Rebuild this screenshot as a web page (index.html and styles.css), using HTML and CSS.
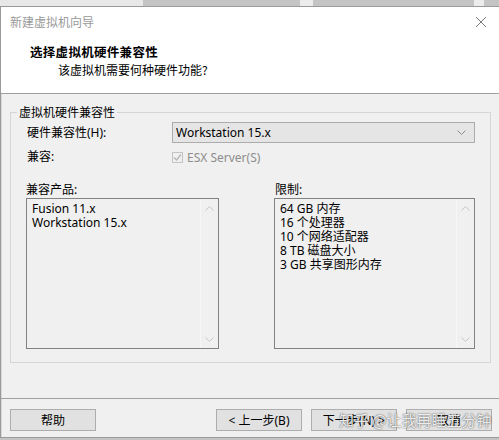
FILE: index.html
```html
<!DOCTYPE html>
<html lang="zh-CN">
<head>
    <meta charset="UTF-8">
    <meta name="viewport" content="width=device-width, initial-scale=1.0">
    <title>新建虚拟机向导</title>
    <link rel="stylesheet" href="styles.css">
</head>
<body>
    <div class="desktop-strip"></div>

    <div class="window">
        <div class="titlebar">
            <span class="titlebar-text">新建虚拟机向导</span>
            <svg class="close-icon" width="12" height="12" viewBox="0 0 12 12">
                <path d="M1 1 L11 11 M11 1 L1 11" stroke="#7a7a7a" stroke-width="1" fill="none"/>
            </svg>
        </div>

        <header class="wizard-header">
            <h1>选择虚拟机硬件兼容性</h1>
            <p>该虚拟机需要何种硬件功能?</p>
        </header>

        <main class="wizard-body">
            <fieldset class="group">
                <legend>虚拟机硬件兼容性</legend>

                <div class="form-row">
                    <span class="label">硬件兼容性(H):</span>
                    <div class="select">
                        <span>Workstation 15.x</span>
                        <svg width="9" height="5" viewBox="0 0 9 5">
                            <path d="M0.5 0.5 L4.5 4.5 L8.5 0.5" stroke="#8c8c8c" stroke-width="1" fill="none"/>
                        </svg>
                    </div>
                </div>

                <div class="form-row check-row">
                    <span class="label">兼容:</span>
                    <label class="checkbox">
                        <span class="box">
                            <svg width="9" height="9" viewBox="0 0 9 9">
                                <path d="M1 4.5 L3.5 7 L8 1.5" stroke="#b4b4b4" stroke-width="1.2" fill="none"/>
                            </svg>
                        </span>
                        ESX Server(S)
                    </label>
                </div>

                <div class="lists">
                    <div class="list-col left">
                        <span class="label">兼容产品:</span>
                        <div class="listbox">
                            <ul>
                                <li>Fusion 11.x</li>
                                <li>Workstation 15.x</li>
                            </ul>
                            <div class="scrollbar">
                                <svg width="9" height="5" viewBox="0 0 9 5"><path d="M0.5 4.5 L4.5 0.5 L8.5 4.5" stroke="#c8c8c8" fill="none"/></svg>
                                <svg width="9" height="5" viewBox="0 0 9 5"><path d="M0.5 0.5 L4.5 4.5 L8.5 0.5" stroke="#c8c8c8" fill="none"/></svg>
                            </div>
                        </div>
                    </div>
                    <div class="list-col right">
                        <span class="label">限制:</span>
                        <div class="listbox">
                            <ul>
                                <li>64 GB 内存</li>
                                <li>16 个处理器</li>
                                <li>10 个网络适配器</li>
                                <li>8 TB 磁盘大小</li>
                                <li>3 GB 共享图形内存</li>
                            </ul>
                            <div class="scrollbar">
                                <svg width="9" height="5" viewBox="0 0 9 5"><path d="M0.5 4.5 L4.5 0.5 L8.5 4.5" stroke="#c8c8c8" fill="none"/></svg>
                                <svg width="9" height="5" viewBox="0 0 9 5"><path d="M0.5 0.5 L4.5 4.5 L8.5 0.5" stroke="#c8c8c8" fill="none"/></svg>
                            </div>
                        </div>
                    </div>
                </div>
            </fieldset>
        </main>

        <footer class="wizard-footer">
            <button class="btn">帮助</button>
            <div class="nav-buttons">
                <button class="btn">&lt; 上一步(B)</button>
                <button class="btn">下一步(N) &gt;</button>
                <button class="btn">取消</button>
            </div>
            <span class="watermark">知乎 @让我再睡五分钟</span>
        </footer>
    </div>
</body>
</html>
```

FILE: styles.css
```css
:root {
    --face: #f0f0f0;
    --button: #e1e1e1;
    --button-border: #adadad;
    --line: #a0a0a0;
    --group-line: #d5d5d5;
    --disabled: #8d8d8d;
}

html, body {
    margin: 0;
    height: 440px;
    overflow: hidden;
}

body {
    font-family: "Noto Sans", "Noto Sans CJK SC", sans-serif;
    font-size: 12px;
    color: #000;
    background: #c4c4c4;
}

/* taskbar-ish strip of other windows behind the dialog */
.desktop-strip {
    height: 6px;
    background: linear-gradient(to right,
        #e8e8e8 0, #e8e8e8 143px,
        #c4c4c4 143px, #c4c4c4 300px,
        #ececec 300px, #ececec 313px,
        #c4c4c4 313px, #c4c4c4 474px,
        #ececec 474px, #ececec 484px,
        #c4c4c4 484px);
}

.window {
    height: 430px;
    display: flex;
    flex-direction: column;
    background: var(--face);
    border-top: 1px solid #9a9a9a;
    border-left: 1px solid #9a9a9a;
    border-bottom: 1px solid #9a9a9a;
    box-shadow: inset 1px 0 0 #d8d8d8;
}

.titlebar {
    height: 29px;
    display: flex;
    align-items: center;
    justify-content: space-between;
    padding: 0 12px 0 9px;
    background: #fff;
}

.titlebar-text {
    color: #999;
    font-family: "Noto Sans CJK SC", sans-serif;
}

.close-icon {
    display: block;
}

.wizard-header {
    height: 57px;
    background: #fff;
    border-bottom: 1px solid var(--line);
    font-family: "Noto Sans CJK SC", sans-serif;
}

.wizard-header h1 {
    margin: 0;
    padding: 8px 0 0 29px;
    font-size: 12.5px;
    line-height: 16px;
    font-weight: 700;
    letter-spacing: 0.3px;
}

.wizard-header p {
    margin: 2px 0 0 57px;
    line-height: 16px;
}

.wizard-body {
    flex: 1;
    padding: 0 8px 0 9px;
}

.group {
    margin: 10px 0 0;
    padding: 0 15px 13px 15px;
    border: 1px solid var(--group-line);
    min-width: 0;
}

.group legend {
    padding: 0 2px;
    margin-left: -9px;
    line-height: 16px;
    font-family: "Noto Sans CJK SC", sans-serif;
}

.label {
    font-family: "Noto Sans", "Noto Sans CJK SC", sans-serif;
    line-height: 16px;
}

.form-row {
    display: grid;
    grid-template-columns: 145px 1fr;
    align-items: center;
    padding-left: 1px;
}

.form-row:first-of-type {
    margin-top: 2px;
}

.select {
    height: 19px;
    display: flex;
    align-items: center;
    justify-content: space-between;
    padding: 0 8px 0 3px;
    background: #e5e5e5;
    border: 1px solid #acacac;
}

.select svg {
    display: block;
}

.check-row {
    height: 20px;
    margin-top: 4px;
}

.checkbox {
    display: flex;
    align-items: center;
    gap: 4px;
    color: var(--disabled);
}

.checkbox .box {
    width: 11px;
    height: 11px;
    box-sizing: border-box;
    border: 1px solid #c4c4c4;
    display: flex;
    align-items: center;
    justify-content: center;
}

.lists {
    display: grid;
    grid-template-columns: 193px 201px;
    justify-content: space-between;
    margin-top: 15px;
}

.list-col {
    display: flex;
    flex-direction: column;
}

.list-col.right .label {
    padding-left: 1px;
}

.listbox {
    height: 149px;
    display: flex;
    border: 1px solid #828282;
    background: var(--face);
}

.listbox ul {
    flex: 1;
    margin: 0;
    padding: 3px 5px;
    list-style: none;
}

.listbox li {
    line-height: 14px;
}

.scrollbar {
    width: 17px;
    display: flex;
    flex-direction: column;
    justify-content: space-between;
    align-items: center;
    padding: 7px 0 6px;
    border-left: 1px solid #f7f7f7;
}

.scrollbar svg {
    display: block;
}

.wizard-footer {
    height: 39px;
    position: relative;
    display: flex;
    justify-content: space-between;
    align-items: flex-start;
    padding: 10px 7px 0 9px;
    border-top: 1px solid var(--line);
    box-sizing: border-box;
}

.nav-buttons {
    display: flex;
    gap: 9px;
}

.btn {
    width: 86px;
    height: 22px;
    padding: 0;
    background: var(--button);
    border: 1px solid var(--button-border);
    font-family: "Noto Sans", "Noto Sans CJK SC", sans-serif;
    font-size: 12px;
    color: #000;
}

/* site watermark stamped over the lower-right corner */
.watermark {
    position: absolute;
    left: 338px;
    top: 10px;
    font-family: "Noto Sans CJK SC", sans-serif;
    font-size: 15px;
    line-height: 22px;
    color: rgba(255, 255, 255, 0.9);
    text-shadow: 0 0 2px rgba(0, 0, 0, 0.55), 0 0 1px rgba(0, 0, 0, 0.4);
    white-space: nowrap;
    pointer-events: none;
}
```
